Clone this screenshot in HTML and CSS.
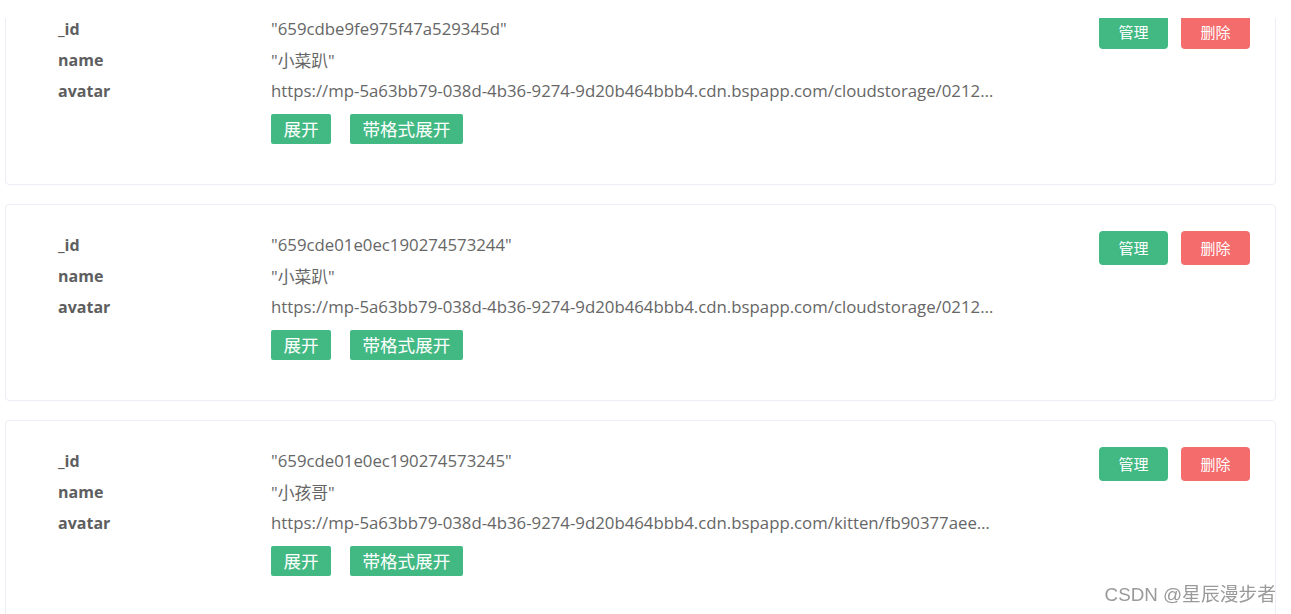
FILE: index.html
```html
<!DOCTYPE html>
<html lang="zh-CN">
<head>
<meta charset="utf-8">
<title>用户列表</title>
<link rel="stylesheet" href="styles.css">
</head>
<body>
<div class="top-cover"></div>
<div class="list">
  <div class="card">
    <div class="fields">
      <div class="row"><span class="label">_id</span><span class="value">"659cdbe9fe975f47a529345d"</span></div>
      <div class="row"><span class="label">name</span><span class="value">"小菜趴"</span></div>
      <div class="row"><span class="label">avatar</span><span class="value">https://mp-5a63bb79-038d-4b36-9274-9d20b464bbb4.cdn.bspapp.com/cloudstorage/0212a7c3-5b2e-4c1d-9f3a-7e8b6d2c1a90.jpg</span></div>
      <div class="expand"><button class="btn-expand">展开</button><button class="btn-expand">带格式展开</button></div>
    </div>
    <div class="actions"><button class="btn btn-green">管理</button><button class="btn btn-red">删除</button></div>
  </div>
  <div class="card">
    <div class="fields">
      <div class="row"><span class="label">_id</span><span class="value">"659cde01e0ec190274573244"</span></div>
      <div class="row"><span class="label">name</span><span class="value">"小菜趴"</span></div>
      <div class="row"><span class="label">avatar</span><span class="value">https://mp-5a63bb79-038d-4b36-9274-9d20b464bbb4.cdn.bspapp.com/cloudstorage/0212a7c3-5b2e-4c1d-9f3a-7e8b6d2c1a90.jpg</span></div>
      <div class="expand"><button class="btn-expand">展开</button><button class="btn-expand">带格式展开</button></div>
    </div>
    <div class="actions"><button class="btn btn-green">管理</button><button class="btn btn-red">删除</button></div>
  </div>
  <div class="card">
    <div class="fields">
      <div class="row"><span class="label">_id</span><span class="value">"659cde01e0ec190274573245"</span></div>
      <div class="row"><span class="label">name</span><span class="value">"小孩哥"</span></div>
      <div class="row"><span class="label">avatar</span><span class="value">https://mp-5a63bb79-038d-4b36-9274-9d20b464bbb4.cdn.bspapp.com/kitten/fb90377aee3b4c1d8e2f5a6b7c8d9e0f.jpg</span></div>
      <div class="expand"><button class="btn-expand">展开</button><button class="btn-expand">带格式展开</button></div>
    </div>
    <div class="actions"><button class="btn btn-green">管理</button><button class="btn btn-red">删除</button></div>
  </div>
</div>
<div class="watermark">CSDN @星辰漫步者</div>
</body>
</html>
```
FILE: styles.css
```css
html, body {
  margin: 0;
  padding: 0;
  background: #ffffff;
  overflow: hidden;
  font-family: "Open Sans", "Noto Sans CJK SC", sans-serif;
}

.top-cover {
  position: fixed;
  top: 0;
  left: 0;
  right: 0;
  height: 18px;
  background: #ffffff;
  z-index: 2;
}

.list {
  margin-top: -12px;
  padding: 0 15px 0 5px;
}

.card {
  display: flex;
  justify-content: space-between;
  align-items: flex-start;
  border: 1px solid #ebeef5;
  border-radius: 4px;
  padding: 24px 25px 40px 52px;
  margin-bottom: 19px;
  background: #ffffff;
}

.fields {
  display: flex;
  flex-direction: column;
}

.row {
  display: flex;
  height: 31px;
  align-items: center;
}

.label {
  width: 213px;
  flex: none;
  font-weight: 700;
  font-size: 16px;
  color: #5e5e60;
}

.value {
  max-width: 724px;
  white-space: nowrap;
  overflow: hidden;
  text-overflow: ellipsis;
  font-size: 16.8px;
  color: #666666;
}

.expand {
  display: flex;
  gap: 19px;
  margin-top: 8px;
  padding-left: 213px;
}

.btn-expand {
  height: 30px;
  padding: 0 12.4px;
  border: none;
  border-radius: 2px;
  background: #42b983;
  color: #ffffff;
  font-family: "Noto Sans CJK SC", sans-serif;
  font-size: 17.6px;
  line-height: 30px;
}

.actions {
  display: flex;
  gap: 13px;
  margin-top: 2px;
}

.btn {
  width: 69px;
  height: 34px;
  border: none;
  border-radius: 4px;
  color: #ffffff;
  font-family: "Noto Sans CJK SC", sans-serif;
  font-size: 15px;
  line-height: 34px;
  padding: 0;
}

.btn-green { background: #42b983; }
.btn-red { background: #f56c6c; }

.watermark {
  position: fixed;
  right: 15px;
  bottom: 8px;
  font-family: "Liberation Sans", "Noto Sans CJK SC", sans-serif;
  font-size: 18.8px;
  color: #9a9a9a;
  text-shadow: 0 0 1px #ffffff;
  z-index: 3;
}
```
